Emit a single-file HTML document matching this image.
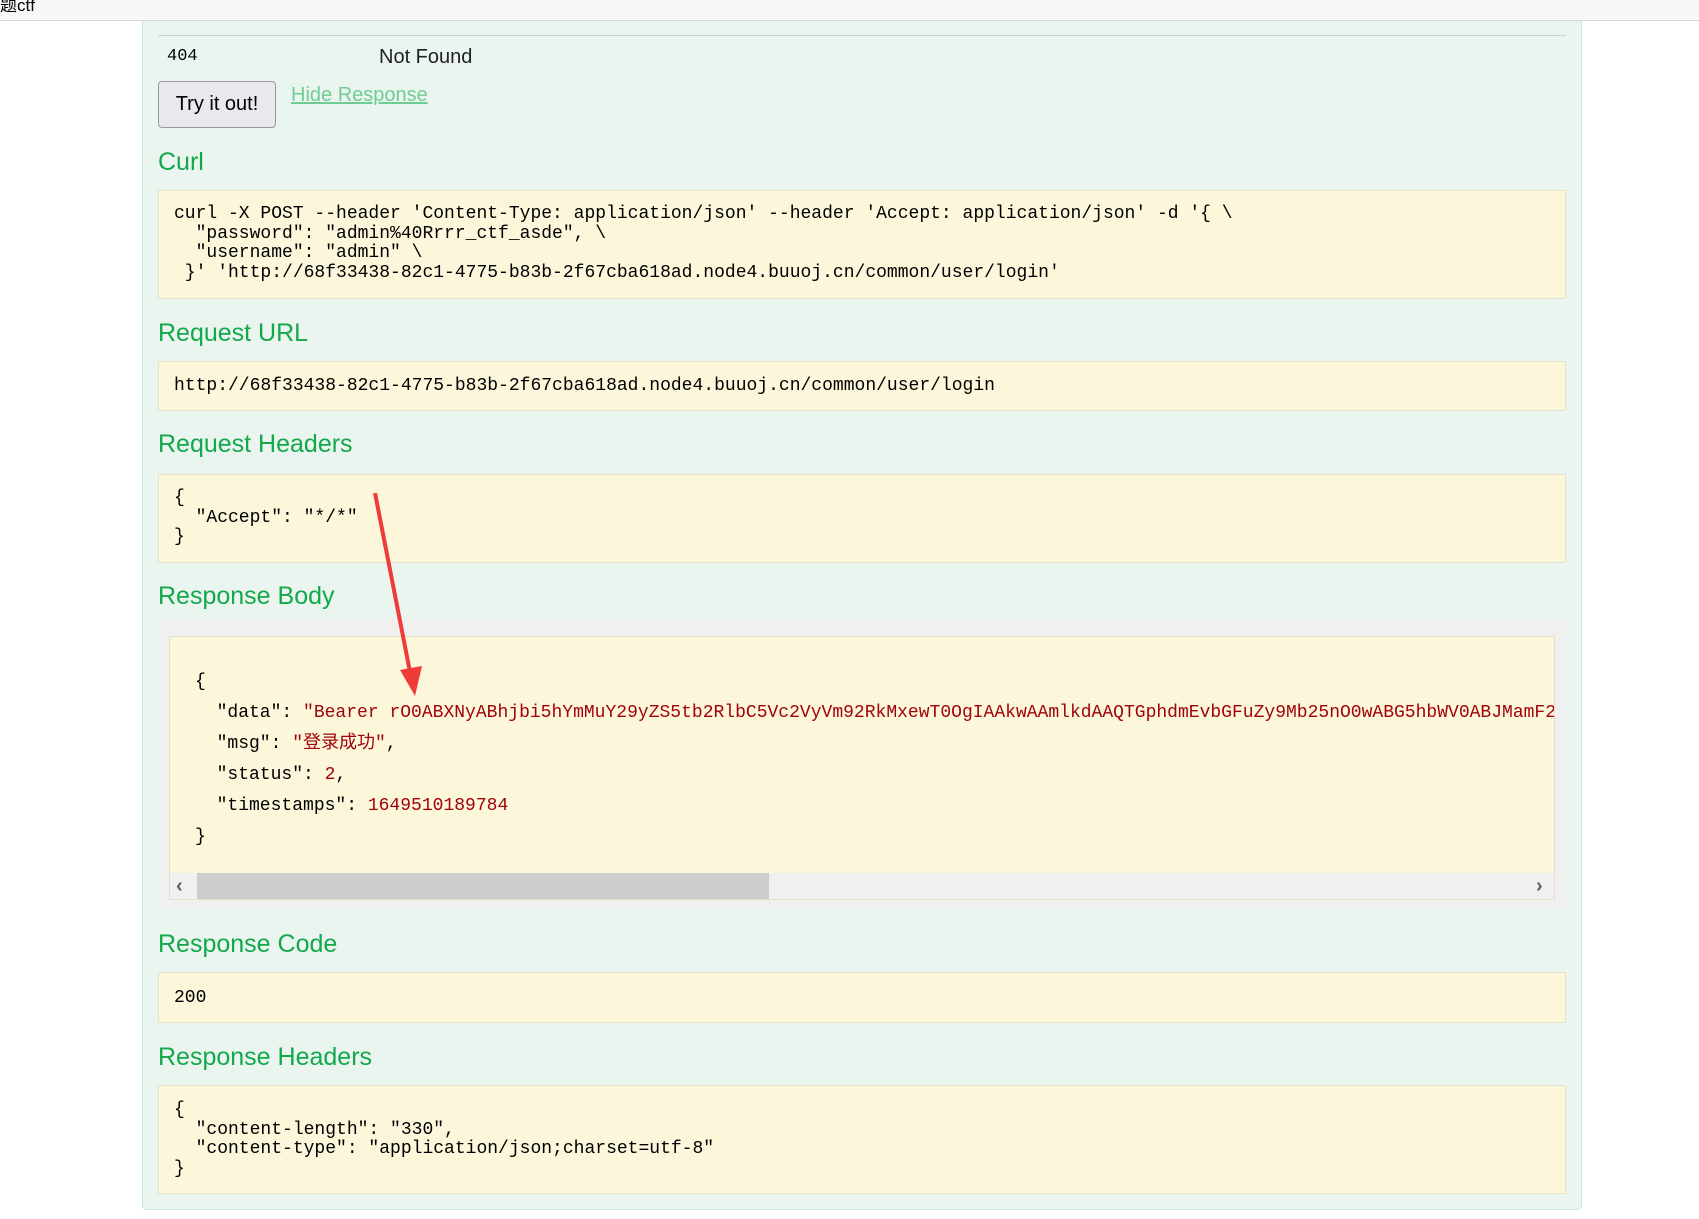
<!DOCTYPE html>
<html><head><meta charset="utf-8"><style>
*{margin:0;padding:0;box-sizing:border-box}
body{width:1699px;height:1219px;background:#fff;position:relative;overflow:hidden;font-family:"Liberation Sans","Noto Sans CJK SC",sans-serif}
.top{position:absolute;left:0;top:0;width:1699px;height:21px;background:#f7f8fa;border-bottom:1px solid #d6d6d6}
.top span{position:absolute;left:0;top:-9px;font-size:17px;color:#000}
.panel{position:absolute;left:142px;top:21px;width:1440px;height:1189px;background:#ebf5f0;border:1px solid #c3e6d6;border-top:none;border-radius:0 0 5px 5px}
.a{position:absolute}
.mono{font-family:"Liberation Mono","DejaVu Sans Mono","Noto Sans CJK SC",monospace;font-size:18px;color:#000;white-space:pre}
h4{position:absolute;left:158px;font-weight:normal;font-size:25px;color:#13a84a}
.box{position:absolute;left:158px;width:1408px;background:#fcf6db;border:1px solid #e5e0c6}
.r{color:#a0040a}
</style></head><body>
<div class="top"><span>题ctf</span></div>
<div class="panel"></div>
<div class="a" style="left:158px;top:35px;width:1408px;height:1px;background:#c7d3cd"></div>
<div class="a mono" style="left:167px;top:47px;font-size:17px">404</div>
<div class="a" style="left:379px;top:46px;font-size:20px;color:#222">Not Found</div>
<div class="a" style="left:158px;top:81px;width:118px;height:47px;background:#e9e8ed;border:1px solid #999;border-radius:4px;font-size:20px;text-align:center;line-height:45px;color:#000">Try it out!</div>
<div class="a" style="left:291px;top:84px;font-size:20px;color:#6fcd94;text-decoration:underline">Hide Response</div>

<h4 style="top:148px">Curl</h4>
<div class="box" style="top:190px;height:109px"><div class="a mono" style="left:15px;top:14px;line-height:19.5px">curl -X POST --header 'Content-Type: application/json' --header 'Accept: application/json' -d '{ \
  "password": "admin%40Rrrr_ctf_asde", \
  "username": "admin" \
 }' 'http://68f33438-82c1-4775-b83b-2f67cba618ad.node4.buuoj.cn/common/user/login'</div></div>

<h4 style="top:319px">Request URL</h4>
<div class="box" style="top:361px;height:50px"><div class="a mono" style="left:15px;top:14px">http://68f33438-82c1-4775-b83b-2f67cba618ad.node4.buuoj.cn/common/user/login</div></div>

<h4 style="top:430px">Request Headers</h4>
<div class="box" style="top:474px;height:89px"><div class="a mono" style="left:15px;top:14px;line-height:19.5px">{
  "Accept": "*/*"
}</div></div>

<h4 style="top:582px">Response Body</h4>
<div class="a" style="left:158px;top:618px;width:1408px;height:290px;background:#f0f0f0"></div>
<div class="a" style="left:169px;top:636px;width:1386px;height:264px;background:#fcf6db;border:1px solid #e5e0c6;overflow:hidden">
<div class="a mono" style="left:25px;top:30px;line-height:31px">{
  "data": <span class="r">"Bearer rO0ABXNyABhjbi5hYmMuY29yZS5tb2RlbC5Vc2VyVm92RkMxewT0OgIAAkwAAmlkdAAQTGphdmEvbGFuZy9Mb25nO0wABG5hbWV0ABJMamF2YS9sYW5nL1N0cmluZzt4cA"</span>
  "msg": <span class="r">"登录成功"</span>,
  "status": <span class="r">2</span>,
  "timestamps": <span class="r">1649510189784</span>
}</div>
<div class="a" style="left:0;top:236px;width:1386px;height:27px;background:#f0f0f0"></div>
<div class="a" style="left:27px;top:236px;width:572px;height:27px;background:#cdcdcd"></div>
<div class="a" style="left:6px;top:238px;font-size:20px;color:#606060;font-weight:bold">‹</div>
<div class="a" style="left:1366px;top:238px;font-size:20px;color:#606060;font-weight:bold">›</div>
</div>

<h4 style="top:930px">Response Code</h4>
<div class="box" style="top:972px;height:51px"><div class="a mono" style="left:15px;top:15px">200</div></div>

<h4 style="top:1043px">Response Headers</h4>
<div class="box" style="top:1085px;height:109px"><div class="a mono" style="left:15px;top:15px;line-height:19.5px">{
  "content-length": "330",
  "content-type": "application/json;charset=utf-8"
}</div></div>

<svg class="a" style="left:0;top:0" width="1699" height="1219">
<line x1="375" y1="493" x2="410" y2="672" stroke="#f03b3b" stroke-width="4"/>
<polygon points="400,670 422,666 415,696" fill="#f03b3b"/>
</svg>
</body></html>
